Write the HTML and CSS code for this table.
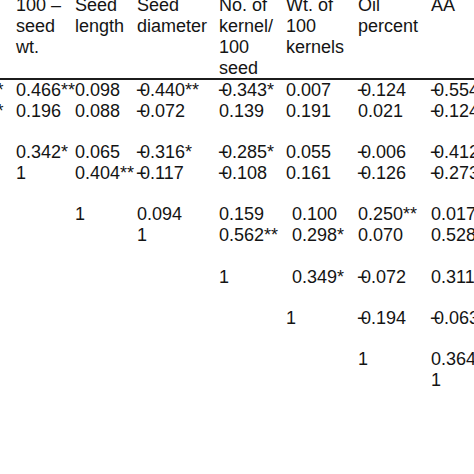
FILE: index.html
```html
<!DOCTYPE html>
<html>
<head>
<meta charset="utf-8">
<link rel="stylesheet" href="styles.css">
</head>
<body>
<div class="wrap">
<table class="corr">
  <colgroup>
    <col class="w0"><col class="w1"><col class="w2"><col class="w3"><col class="w4"><col class="w5"><col class="w6"><col class="w7">
  </colgroup>
  <thead>
    <tr>
      <th class="cut"></th>
      <th>100 –<br>seed<br>wt.</th>
      <th>Seed<br>length</th>
      <th>Seed<br>diameter</th>
      <th>No. of<br>kernel/<br>100<br>seed</th>
      <th>Wt. of<br>100<br>kernels</th>
      <th>Oil<br>percent</th>
      <th>AA</th>
    </tr>
  </thead>
  <tbody>
    <tr>
      <td class="cut">**</td><td>0.466**</td><td>0.098</td><td><span class="m">−</span>0.440**</td><td><span class="m">−</span>0.343*</td><td>0.007</td><td><span class="m">−</span>0.124</td><td><span class="m">−</span>0.554**</td>
    </tr>
    <tr class="tall">
      <td class="cut">*</td><td>0.196</td><td>0.088</td><td><span class="m">−</span>0.072</td><td>0.139</td><td>0.191</td><td>0.021</td><td><span class="m">−</span>0.124</td>
    </tr>
    <tr>
      <td class="cut"></td><td>0.342*</td><td>0.065</td><td><span class="m">−</span>0.316*</td><td><span class="m">−</span>0.285*</td><td>0.055</td><td><span class="m">−</span>0.006</td><td><span class="m">−</span>0.412*</td>
    </tr>
    <tr class="tall">
      <td class="cut"></td><td>1</td><td>0.404**</td><td><span class="m">−</span>0.117</td><td><span class="m">−</span>0.108</td><td>0.161</td><td><span class="m">−</span>0.126</td><td><span class="m">−</span>0.273</td>
    </tr>
    <tr>
      <td class="cut"></td><td></td><td>1</td><td>0.094</td><td>0.159</td><td><span class="sp">0.100</span></td><td>0.250**</td><td>0.017</td>
    </tr>
    <tr class="tall">
      <td class="cut"></td><td></td><td></td><td>1</td><td>0.562**</td><td><span class="sp">0.298*</span></td><td>0.070</td><td>0.528**</td>
    </tr>
    <tr class="tall">
      <td class="cut"></td><td></td><td></td><td></td><td>1</td><td><span class="sp">0.349*</span></td><td><span class="m">−</span>0.072</td><td>0.311</td>
    </tr>
    <tr class="tall">
      <td class="cut"></td><td></td><td></td><td></td><td></td><td>1</td><td><span class="m">−</span>0.194</td><td><span class="m">−</span>0.063</td>
    </tr>
    <tr>
      <td class="cut"></td><td></td><td></td><td></td><td></td><td></td><td>1</td><td>0.364*</td>
    </tr>
    <tr>
      <td class="cut"></td><td></td><td></td><td></td><td></td><td></td><td></td><td>1</td>
    </tr>
  </tbody>
</table>
</div>
</body>
</html>
```
FILE: styles.css
```css
html, body {
  margin: 0;
  padding: 0;
  background: #ffffff;
}
body {
  width: 474px;
  height: 474px;
  overflow: hidden;
  font-family: "Liberation Sans", Arial, sans-serif;
  font-size: 18px;
  line-height: 20.7px;
  color: #141414;
}
.wrap {
  margin-top: -4.6px;
  margin-left: -24px;
}
.corr {
  border-collapse: collapse;
  border-spacing: 0;
  table-layout: fixed;
  width: 536px;
}
.w0 { width: 40px; }
.w1 { width: 59px; }
.w2 { width: 62px; }
.w3 { width: 82px; }
.w4 { width: 67px; }
.w5 { width: 72px; }
.w6 { width: 73px; }
.w7 { width: 81px; }
.corr th,
.corr td {
  padding: 0;
  text-align: left;
  vertical-align: top;
  white-space: nowrap;
  font-weight: normal;
  overflow: visible;
}
.corr thead th {
  border-bottom: 2px solid #1c1c1c;
  height: 82.8px;
}
.corr tbody tr {
  height: 20.7px;
}
.corr tbody tr.tall {
  height: 41.4px;
}
.corr .cut {
  text-align: right;
  padding-right: 12.5px;
}
.m {
  display: inline-block;
  margin-left: -1px;
  width: 4px;
  overflow: visible;
}
.sp {
  padding-left: 6px;
}
```
